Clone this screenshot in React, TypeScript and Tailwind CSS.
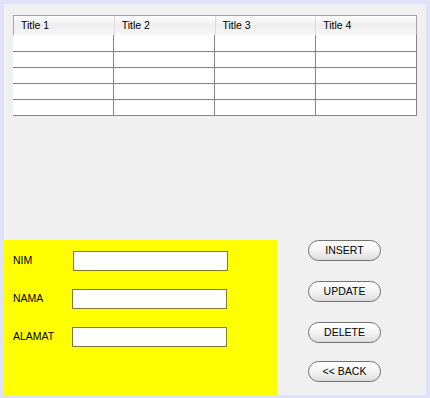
import React from 'react'

const titles = ['Title 1', 'Title 2', 'Title 3', 'Title 4']
const rows = [0, 1, 2, 3, 4]

const fields = [
  { label: 'NIM', shift: 'ml-[60px]' },
  { label: 'NAMA', shift: 'ml-[59px]' },
  { label: 'ALAMAT', shift: 'ml-[59px]' },
]

const buttons = [
  { label: 'INSERT', mt: 'mt-0' },
  { label: 'UPDATE', mt: 'mt-[20px]' },
  { label: 'DELETE', mt: 'mt-[20px]' },
  { label: '<< BACK', mt: 'mt-[18px]' },
]

function Table() {
  return (
    <div className="ml-[9px] mt-[11px] w-[404px]">
      <div className="flex h-[20px] border-t border-l border-[#a3a3a3] bg-gradient-to-b from-white via-[#ededed] to-[#f9f9f9]">
        {titles.map((t, i) => (
          <div
            key={t}
            className={
              'flex w-[101px] items-center pl-[7px] text-[10.5px] text-black ' +
              (i < 3 ? 'border-r border-[#dcdcdc]' : 'border-r border-[#a3a3a3]')
            }
          >
            {t}
          </div>
        ))}
      </div>
      <div className="bg-white">
        {rows.map((r) => (
          <div key={r} className={'flex border-b border-[#848484] ' + (r === 0 ? 'h-[17px]' : 'h-[16px]')}>
            {titles.map((t) => (
              <div key={t} className="w-[101px] border-r border-[#848484]" />
            ))}
          </div>
        ))}
      </div>
    </div>
  )
}

export default function App() {
  return (
    <div
      className="h-[398px] w-[430px] bg-[#e1e1f9] pt-[4px] pl-[4px] pr-[4px] pb-[3px]"
      style={{ fontFamily: '"Liberation Sans", Arial, sans-serif' }}
    >
      <div className="flex h-full flex-col bg-[#f0f0f0]">
        <Table />
        <div className="flex-1" />
        <div className="flex items-start">
          <div className="h-[155px] w-[273px] bg-[#ffff00] pl-[9px] pt-[11px]">
            {fields.map((f, i) => (
              <div key={f.label} className={'flex items-center ' + (i > 0 ? 'mt-[18px]' : '')}>
                <span className="w-[0px] whitespace-nowrap text-[10.5px] text-black">{f.label}</span>
                <div className={'h-[20px] w-[155px] border border-[#7e7a30] bg-[#fffffd] ' + f.shift} />
              </div>
            ))}
          </div>
          <div className="ml-[31px] flex flex-col">
            {buttons.map((b) => (
              <button
                key={b.label}
                className={
                  'flex h-[21px] w-[73px] items-center justify-center rounded-full border border-[#707070] bg-gradient-to-b from-white via-[#f4f4f4] to-[#dcdcdc] text-[10.5px] text-black shadow-[inset_0_1px_0_#ffffff] ' +
                  b.mt
                }
              >
                {b.label}
              </button>
            ))}
          </div>
        </div>
      </div>
    </div>
  )
}
